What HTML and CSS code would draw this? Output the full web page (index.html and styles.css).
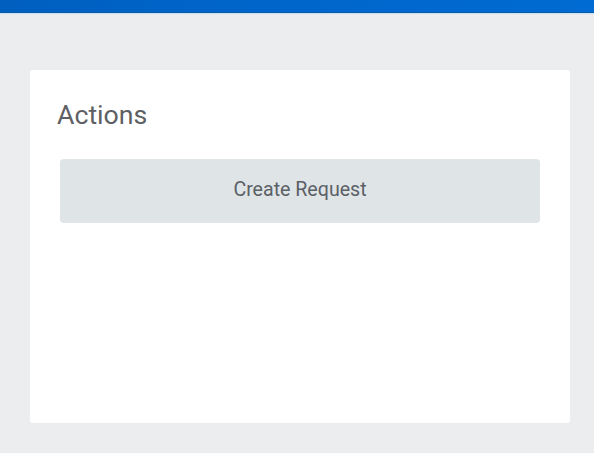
FILE: index.html
```html
<!DOCTYPE html>
<html>
<head>
<meta charset="utf-8">
<link rel="stylesheet" href="styles.css">
</head>
<body>
<div class="topbar"></div>
<main class="page">
  <section class="card">
    <h2 class="card-title">Actions</h2>
    <button class="action-btn">Create Request</button>
  </section>
</main>
</body>
</html>
```
FILE: styles.css
```css
* { box-sizing: border-box; }
html, body { margin: 0; padding: 0; }
body {
  background: #ecedef;
  font-family: Roboto, "Noto Sans", sans-serif;
  width: 594px;
  height: 453px;
  overflow: hidden;
}
.topbar {
  height: 13px;
  background: linear-gradient(90deg, #005fbf 0%, #0066cc 50%, #006bd2 100%);
  border-bottom: 1px solid #0a58a8;
  box-shadow: 0 1px 1px rgba(180, 220, 240, 0.6);
}
.page {
  padding: 57px 24px 0 30px;
}
.card {
  background: #ffffff;
  border-radius: 3px;
  height: 353px;
  padding: 27px 30px 0 30px;
}
.card-title {
  margin: 0 0 0 -3px;
  font-weight: 400;
  font-size: 26.7px;
  line-height: 36px;
  color: #5e6064;
}
.action-btn {
  display: block;
  width: 100%;
  height: 64px;
  margin-top: 26px;
  padding: 0 0 4px 0;
  border: none;
  border-radius: 4px;
  background: #dfe4e7;
  color: #5b6066;
  font-family: Roboto, "Noto Sans", sans-serif;
  font-size: 19.6px;
  cursor: pointer;
}
```
